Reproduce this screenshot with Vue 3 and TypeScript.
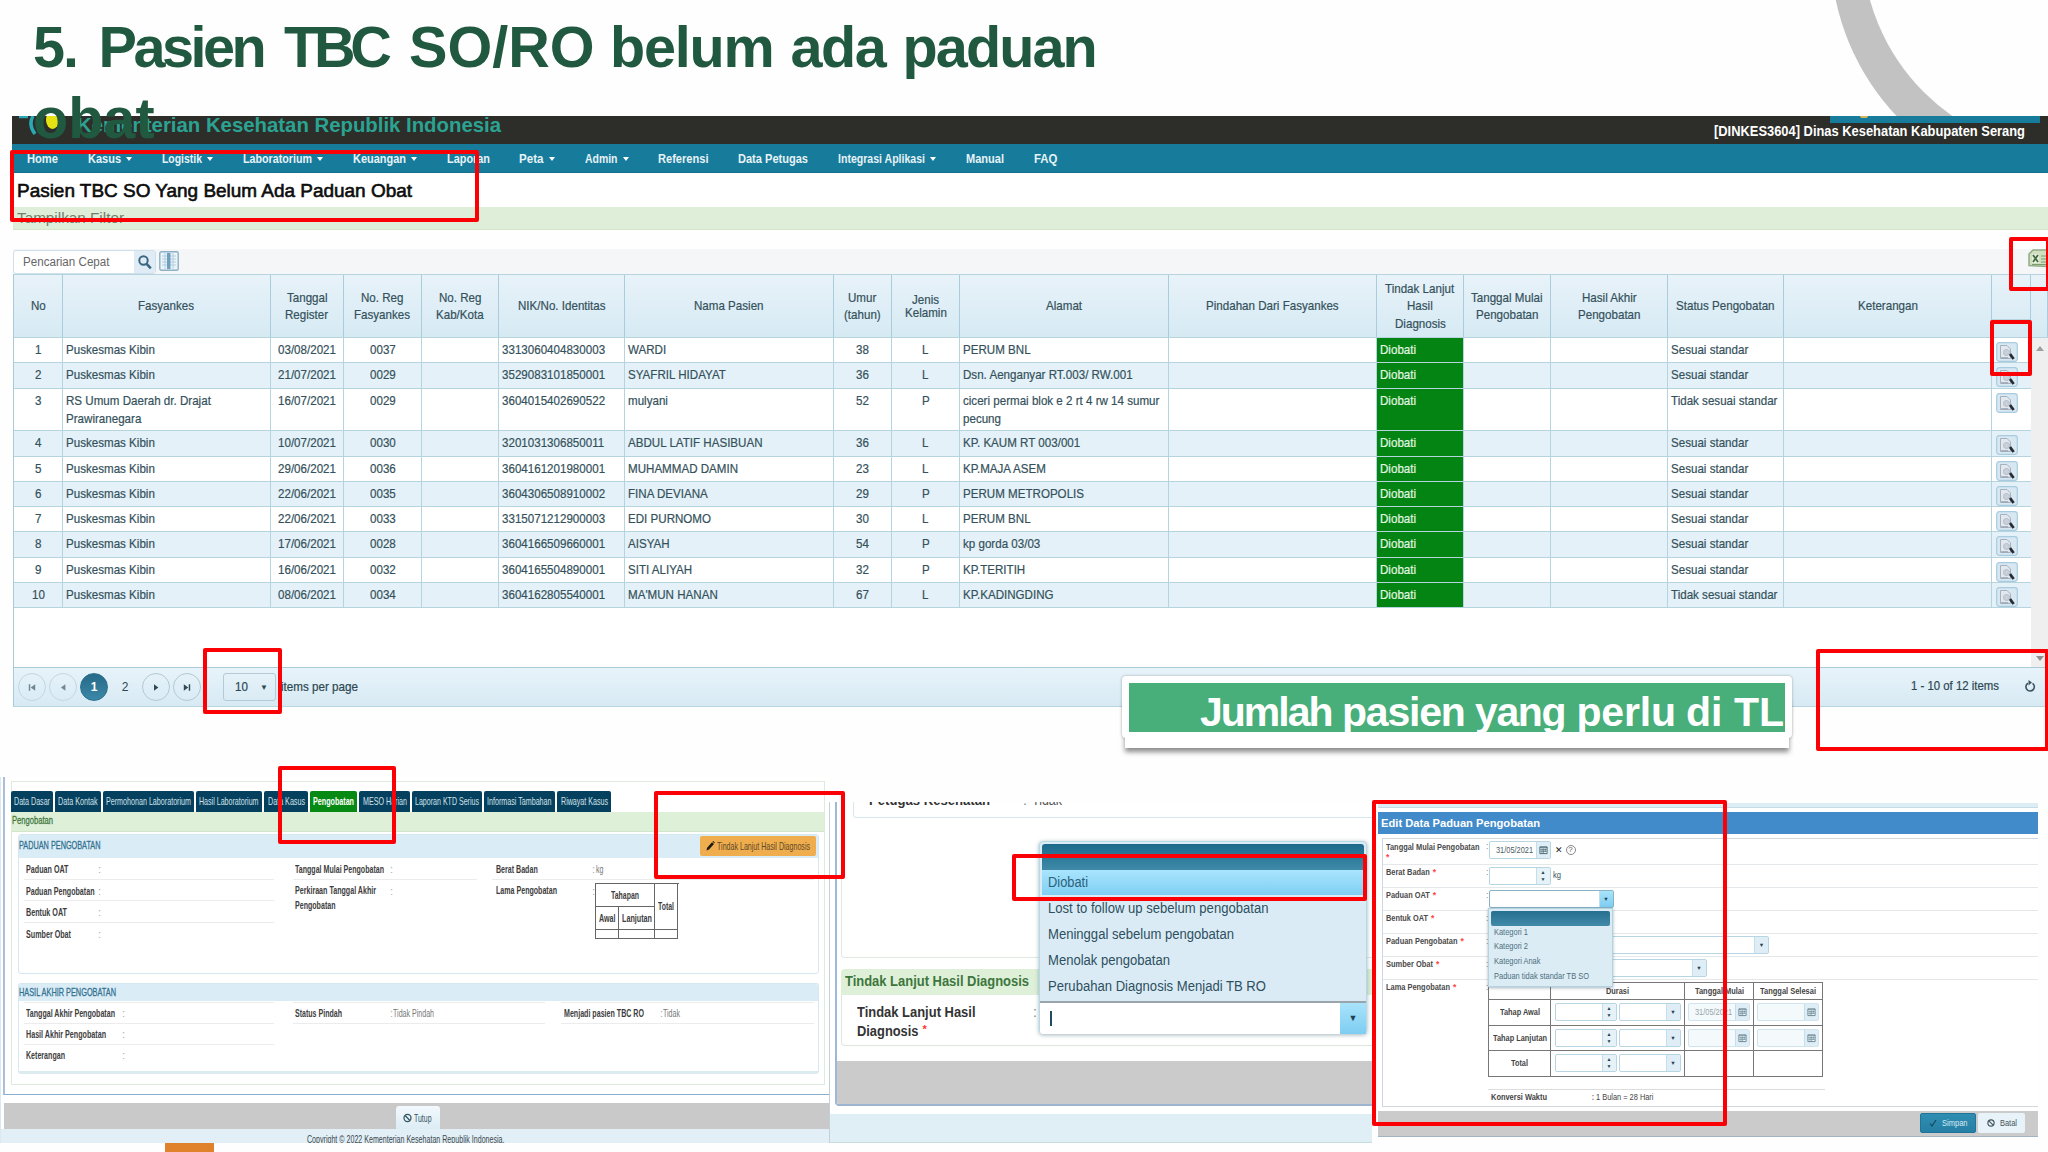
<script setup lang="ts">
import type { Directive } from 'vue'

/**
 * Horizontally squeezes a text run. Values below 3 are a ratio,
 * larger ones are the wanted width in pixels.
 */
const vFit: Directive<HTMLElement, number> = {
  mounted(el, binding) {
    const natural = el.getBoundingClientRect().width
    const k = binding.value < 3 ? binding.value : binding.value / natural
    el.style.transform = `scaleX(${k})`
    el.style.marginRight = `${natural * (k - 1)}px`
  },
}

interface Word { text: string; step: number; ls: number }
const titleWords: Word[] = [
  { text: '5.', step: 65.5, ls: -2 },
  { text: 'Pasien', step: 185.5, ls: -3.5 },
  { text: 'TBC', step: 125, ls: -5.2 },
  { text: 'SO/RO', step: 201, ls: 0 },
  { text: 'belum', step: 180.5, ls: -1.2 },
  { text: 'ada', step: 112, ls: -1.5 },
  { text: 'paduan', step: 200, ls: -1.9 },
]
const bannerWords: Word[] = [
  { text: 'Jumlah', step: 142, ls: -2 },
  { text: 'pasien', step: 133, ls: -1.2 },
  { text: 'yang', step: 101.5, ls: -1.4 },
  { text: 'perlu', step: 109.5, ls: -0.2 },
  { text: 'di', step: 48, ls: 0 },
  { text: 'TL', step: 52, ls: 0 },
]

interface NavItem { text: string; w: number; caret?: boolean }
const nav: NavItem[] = [
  { text: 'Home', w: 31 },
  { text: 'Kasus', w: 33, caret: true },
  { text: 'Logistik', w: 40, caret: true },
  { text: 'Laboratorium', w: 69, caret: true },
  { text: 'Keuangan', w: 53, caret: true },
  { text: 'Laporan', w: 43 },
  { text: 'Peta', w: 24.5, caret: true },
  { text: 'Admin', w: 32.5, caret: true },
  { text: 'Referensi', w: 50.5 },
  { text: 'Data Petugas', w: 70 },
  { text: 'Integrasi Aplikasi', w: 87, caret: true },
  { text: 'Manual', w: 38 },
  { text: 'FAQ', w: 23.5 },
]

const headers: string[][] = [
  ['No'], ['Fasyankes'], ['Tanggal', 'Register'], ['No. Reg', 'Fasyankes'], ['No. Reg', 'Kab/Kota'],
  ['NIK/No. Identitas'], ['Nama Pasien'], ['Umur', '(tahun)'], ['Jenis', 'Kelamin'], ['Alamat'],
  ['Pindahan Dari Fasyankes'], ['Tindak Lanjut', 'Hasil', 'Diagnosis'], ['Tanggal Mulai', 'Pengobatan'],
  ['Hasil Akhir', 'Pengobatan'], ['Status Pengobatan'], ['Keterangan'],
]

interface Patient {
  h: number; unit: string[]; date: string; reg: string; nik: string; name: string
  age: number; sex: string; address: string[]; status: string
}
const kibin = ['Puskesmas Kibin']
const ok = 'Sesuai standar'
const notOk = 'Tidak sesuai standar'
const patients: Patient[] = [
  { h: 25, unit: kibin, date: '03/08/2021', reg: '0037', nik: '3313060404830003', name: 'WARDI', age: 38, sex: 'L', address: ['PERUM BNL'], status: ok },
  { h: 26, unit: kibin, date: '21/07/2021', reg: '0029', nik: '3529083101850001', name: 'SYAFRIL HIDAYAT', age: 36, sex: 'L', address: ['Dsn. Aenganyar RT.003/ RW.001'], status: ok },
  { h: 42, unit: ['RS Umum Daerah dr. Drajat', 'Prawiranegara'], date: '16/07/2021', reg: '0029', nik: '3604015402690522', name: 'mulyani', age: 52, sex: 'P', address: ['ciceri permai blok e 2 rt 4 rw 14 sumur', 'pecung'], status: notOk },
  { h: 26, unit: kibin, date: '10/07/2021', reg: '0030', nik: '3201031306850011', name: 'ABDUL LATIF HASIBUAN', age: 36, sex: 'L', address: ['KP. KAUM RT 003/001'], status: ok },
  { h: 25, unit: kibin, date: '29/06/2021', reg: '0036', nik: '3604161201980001', name: 'MUHAMMAD DAMIN', age: 23, sex: 'L', address: ['KP.MAJA ASEM'], status: ok },
  { h: 25, unit: kibin, date: '22/06/2021', reg: '0035', nik: '3604306508910002', name: 'FINA DEVIANA', age: 29, sex: 'P', address: ['PERUM METROPOLIS'], status: ok },
  { h: 25, unit: kibin, date: '22/06/2021', reg: '0033', nik: '3315071212900003', name: 'EDI PURNOMO', age: 30, sex: 'L', address: ['PERUM BNL'], status: ok },
  { h: 26, unit: kibin, date: '17/06/2021', reg: '0028', nik: '3604166509660001', name: 'AISYAH', age: 54, sex: 'P', address: ['kp gorda 03/03'], status: ok },
  { h: 25, unit: kibin, date: '16/06/2021', reg: '0032', nik: '3604165504890001', name: 'SITI ALIYAH', age: 32, sex: 'P', address: ['KP.TERITIH'], status: ok },
  { h: 25, unit: kibin, date: '08/06/2021', reg: '0034', nik: '3604162805540001', name: "MA'MUN HANAN", age: 67, sex: 'L', address: ['KP.KADINGDING'], status: notOk },
]

const tabs = [
  { text: 'Data Dasar', w: 42, tw: 36 },
  { text: 'Data Kontak', w: 46, tw: 39.5 },
  { text: 'Permohonan Laboratorium', w: 91, tw: 85 },
  { text: 'Hasil Laboratorium', w: 66, tw: 59.5 },
  { text: 'Data Kasus', w: 44, tw: 37 },
  { text: 'Pengobatan', w: 47, tw: 41, active: true },
  { text: 'MESO Harian', w: 51, tw: 44 },
  { text: 'Laporan KTD Serius', w: 70, tw: 64 },
  { text: 'Informasi Tambahan', w: 71, tw: 64.5 },
  { text: 'Riwayat Kasus', w: 54, tw: 47 },
]

const regimen = [
  { text: 'Paduan OAT', w: 42.5 },
  { text: 'Paduan Pengobatan', w: 68.5 },
  { text: 'Bentuk OAT', w: 41 },
  { text: 'Sumber Obat', w: 45 },
]
const outcome = [
  { text: 'Tanggal Akhir Pengobatan', w: 89 },
  { text: 'Hasil Akhir Pengobatan', w: 80 },
  { text: 'Keterangan', w: 39 },
]
const followUps = [
  { text: 'Diobati', w: 40, active: true },
  { text: 'Lost to follow up sebelum pengobatan', w: 220.5 },
  { text: 'Meninggal sebelum pengobatan', w: 186 },
  { text: 'Menolak pengobatan', w: 122 },
  { text: 'Perubahan Diagnosis Menjadi TB RO', w: 218 },
]
const categories = [
  { text: 'Kategori 1', w: 34 },
  { text: 'Kategori 2', w: 34 },
  { text: 'Kategori Anak', w: 46.5 },
  { text: 'Paduan tidak standar TB SO', w: 95 },
]
const phases = [
  { text: 'Tahap Awal', w: 40, start: '31/05/2021', dates: true },
  { text: 'Tahap Lanjutan', w: 54, start: '', dates: true },
  { text: 'Total', w: 17, start: '', dates: false },
]

// Highlight frames: x, y, width, height
const marks = [
  [10, 150, 469, 72], [2009, 237, 41, 54], [1990, 320, 42, 56], [203, 648, 79, 66],
  [1816, 649, 233, 102], [278, 766, 118, 78], [654, 791, 191, 88], [1012, 854, 355, 47],
  [1372, 800, 355, 326],
]
</script>

<template>
  <main class="slide">
    <svg class="defs" width="0" height="0">
      <symbol id="i-cal" viewBox="0 0 10 10">
        <path d="M1 1.5h8v7.5H1z" fill="#f3fafd" stroke="currentColor" stroke-width="1" />
        <path d="M1 2.3h8M3.4 3v5.6M5.2 3v5.6M7 3v4M1.5 4.6h7M1.5 6.5h7" stroke="currentColor" stroke-width=".7" fill="none" />
      </symbol>
      <symbol id="i-ban" viewBox="0 0 10 10">
        <circle cx="5" cy="5" r="3.9" fill="none" stroke="currentColor" stroke-width="1.4" />
        <path d="M2.3 2.3l5.4 5.4" stroke="currentColor" stroke-width="1.4" />
      </symbol>
      <symbol id="i-doc" viewBox="0 0 22 20">
        <rect x=".7" y=".7" width="20.6" height="18.6" rx="2.5" fill="#d7e8f3" stroke="#a9cbdf" stroke-width="1.2" />
        <path d="M4.500 3.500h6.500l3.500 3.500v9.500h-10z" fill="#e3e8ee" stroke="#a5b1bf" stroke-width="1" />
        <circle cx="10.500" cy="10.500" r="3" fill="#c9d0d9" stroke="#b3bcc8" />
        <path d="M12.200 15.800h-7" stroke="#8f9baa" stroke-width="1" />
        <path d="M14 12l3.600 5" stroke="#252c35" stroke-width="2.800" />
      </symbol>
    </svg>

    <svg class="ring" width="240" height="116" viewBox="0 0 240 116">
      <circle cx="262" cy="-50" r="241.500" fill="#c2c2c2" />
      <circle cx="262" cy="-56.200" r="209.700" fill="#fefefe" />
    </svg>

    <section class="app">
      <header class="brand">
        <svg class="logo" width="60" height="20" viewBox="0 0 60 20">
          <path d="M2 .5h9M16 0q-5 9 2 18" stroke="#2aa9b4" stroke-width="3.500" fill="none" />
          <ellipse cx="35.500" cy="4" rx="6.500" ry="9" fill="#e6e312" />
        </svg>
        <span v-fit="424" class="t brand-name">Kementerian Kesehatan Republik Indonesia</span>
        <span v-fit="311" class="t brand-user">[DINKES3604] Dinas Kesehatan Kabupaten Serang</span>
        <i class="brand-btn"><i></i></i>
      </header>
      <nav class="nav">
        <span v-for="n in nav" :key="n.text" class="nav-item">
          <span v-fit="n.w" class="t">{{ n.text }}</span><i v-if="n.caret" class="caret"></i>
        </span>
      </nav>
      <h2 class="page-title"><span v-fit="395" class="t">Pasien TBC SO Yang Belum Ada Paduan Obat</span></h2>
      <div class="filter"><span v-fit="107" class="t">Tampilkan Filter</span></div>

      <div class="toolbar">
        <div class="search">
          <span v-fit="86.5" class="t">Pencarian Cepat</span>
          <i class="search-btn">
            <svg width="16" height="16" viewBox="0 0 16 16"><circle cx="6.5" cy="6.5" r="4.2" fill="none" stroke="#3c6780" stroke-width="2" /><path d="M9.6 9.8l4.2 4.6" stroke="#3c6780" stroke-width="2.6" /></svg>
          </i>
        </div>
        <svg class="cols" width="20" height="20" viewBox="0 0 20 20">
          <rect x=".8" y=".8" width="18.4" height="18.4" rx="1.5" fill="#eaf4fa" stroke="#8fb0c4" stroke-width="1.4" />
          <path d="M3 5h14M3 8h14M3 11h14M3 14h14M6 2v16M14 2v16" stroke="#aac7d8" stroke-width=".8" />
          <path d="M8 2h3.500v16H8z" fill="#6f9fbd" />
        </svg>
        <svg class="excel" width="20" height="19" viewBox="0 0 20 19">
          <path d="M5 1h15v16.500l-19-1V5z" fill="#cfdfc0" stroke="#93ab85" stroke-width="1.5" />
          <path d="M4 5h7v9H4z" fill="#e6eedd" /><path d="M5 6l5 7M10 6l-5 7" stroke="#42693f" stroke-width="1.800" /><path d="M13 7h6M13 10h6M13 13h6M4 15.500h14" stroke="#7d9c72" stroke-width="1.200" />
        </svg>
      </div>

      <div class="grid">
        <div class="row head">
          <div v-for="(h, i) in headers" :key="i" class="cell" :class="{ tight: i === 8 }">
            <span v-for="l in h" :key="l"><span v-fit="0.935" class="t">{{ l }}</span></span>
          </div>
          <div class="cell split"></div><div class="cell"></div>
        </div>
        <div class="body">
          <div class="rows">
            <div v-for="(p, i) in patients" :key="i" class="row" :class="{ alt: i % 2 }" :style="{ height: p.h + 'px' }">
              <div class="cell c num"><span v-fit="0.935" class="t">{{ i + 1 }}</span></div>
              <div class="cell"><span v-for="l in p.unit" :key="l"><span v-fit="0.935" class="t">{{ l }}</span></span></div>
              <div class="cell c"><span v-fit="0.935" class="t">{{ p.date }}</span></div>
              <div class="cell c"><span v-fit="0.935" class="t">{{ p.reg }}</span></div>
              <div class="cell"></div>
              <div class="cell"><span v-fit="0.935" class="t">{{ p.nik }}</span></div>
              <div class="cell"><span v-fit="0.935" class="t">{{ p.name }}</span></div>
              <div class="cell c"><span v-fit="0.935" class="t">{{ p.age }}</span></div>
              <div class="cell c"><span v-fit="0.935" class="t">{{ p.sex }}</span></div>
              <div class="cell"><span v-for="l in p.address" :key="l"><span v-fit="0.935" class="t">{{ l }}</span></span></div>
              <div class="cell"></div>
              <div class="cell treated"><span v-fit="0.935" class="t">Diobati</span></div>
              <div class="cell"></div><div class="cell"></div>
              <div class="cell"><span v-fit="0.935" class="t">{{ p.status }}</span></div>
              <div class="cell"></div>
              <div class="cell act"><svg width="22" height="20"><use href="#i-doc" /></svg></div>
            </div>
          </div>
          <div class="scroll"><i class="up"></i><i class="down"></i></div>
        </div>
        <footer class="pager">
          <i class="pg dim"><svg width="8" height="9" viewBox="0 0 10 10"><path d="M1 1h1.8v8H1zM9 1v8L3.4 5z" /></svg></i>
          <i class="pg dim"><svg width="8" height="9" viewBox="0 0 10 10"><path d="M8 1v8L2.4 5z" /></svg></i>
          <i class="pg on">1</i>
          <i class="pg plain">2</i>
          <i class="pg"><svg width="8" height="9" viewBox="0 0 10 10"><path d="M2.5 1v8L8 5z" /></svg></i>
          <i class="pg"><svg width="8" height="9" viewBox="0 0 10 10"><path d="M9 1H7.2v8H9zM1 1v8l5.600-4z" /></svg></i>
          <span class="size"><span v-fit="0.935" class="t">10</span><b>▼</b></span>
          <span v-fit="77" class="t">items per page</span>
          <span v-fit="88" class="t total">1 - 10 of 12 items</span>
          <svg class="reload" width="12" height="14" viewBox="0 0 12 14"><path d="M8.500 3.300a4.200 4.200 0 1 1-4.600-.1" fill="none" stroke="#3a5560" stroke-width="1.6" /><path d="M4.500 0L8 2.600 4.500 5.400z" fill="#3a5560" /></svg>
        </footer>
      </div>
    </section>

    <h1 class="title">
      <span class="words"><span v-for="w in titleWords" :key="w.text" :style="{ width: w.step + 'px', letterSpacing: w.ls + 'px' }">{{ w.text }} </span></span>
      <span class="words">obat</span>
    </h1>

    <div class="banner-back"></div>
    <div class="banner">
      <div class="words"><span v-for="w in bannerWords" :key="w.text" :style="{ width: w.step + 'px', letterSpacing: w.ls + 'px' }">{{ w.text }} </span></div>
    </div>

    <!-- Treatment tab -->
    <section class="case">
      <div class="case-frame">
        <div class="case-box">
          <div class="tabs">
            <span v-for="t in tabs" :key="t.text" class="tab" :class="{ active: t.active }" :style="{ width: t.w + 'px' }"><span v-fit="t.tw" class="t">{{ t.text }}</span></span>
          </div>
          <div class="strip"><span v-fit="41" class="t">Pengobatan</span></div>
          <div class="card regimen">
            <div class="card-head">
              <span v-fit="81.500" class="t">PADUAN PENGOBATAN</span>
              <button class="warn">
                <svg width="9" height="10" viewBox="0 0 9 10"><path d="M.5 9.500l.6-2.800L6 1.200 8 3 3 8.600zM6.500.7l.8-.6 1.500 1.400-.5.800z" fill="#1d1a14" /></svg>
                <span v-fit="93" class="t">Tindak Lanjut Hasil Diagnosis</span>
              </button>
            </div>
            <div class="trio">
              <div>
                <div v-for="r in regimen" :key="r.text" class="line"><span class="lab"><span v-fit="r.w" class="t">{{ r.text }}</span></span><em>:</em></div>
              </div>
              <div>
                <div class="line"><span class="lab"><span v-fit="89" class="t">Tanggal Mulai Pengobatan</span></span><em>:</em></div>
                <div class="line tall"><span class="lab"><span v-fit="81" class="t">Perkiraan Tanggal Akhir</span><br><span v-fit="40.500" class="t">Pengobatan</span></span><em>:</em></div>
              </div>
              <div>
                <div class="line"><span class="lab"><span v-fit="41.700" class="t">Berat Badan</span></span><em>:</em><span v-fit="7.500" class="t val">kg</span></div>
                <div class="line tall"><span class="lab"><span v-fit="61" class="t">Lama Pengobatan</span></span><em>:</em>
                  <div class="mini">
                    <div class="m1"><span v-fit="28" class="t">Tahapan</span></div>
                    <div class="m2"><span v-fit="16" class="t">Total</span></div>
                    <div><span v-fit="16.500" class="t">Awal</span></div>
                    <div><span v-fit="30" class="t">Lanjutan</span></div>
                    <div></div><div></div><div></div>
                  </div>
                </div>
              </div>
            </div>
          </div>
          <div class="card outcome">
            <div class="card-head"><span v-fit="97" class="t">HASIL AKHIR PENGOBATAN</span></div>
            <div class="trio">
              <div>
                <div v-for="r in outcome" :key="r.text" class="line"><span class="lab"><span v-fit="r.w" class="t">{{ r.text }}</span></span><em>:</em></div>
              </div>
              <div>
                <div class="line"><span class="lab"><span v-fit="47" class="t">Status Pindah</span></span><em>:</em><span v-fit="41" class="t val">Tidak Pindah</span></div>
              </div>
              <div>
                <div class="line"><span class="lab"><span v-fit="80" class="t">Menjadi pasien TBC RO</span></span><em>:</em><span v-fit="17" class="t val">Tidak</span></div>
              </div>
            </div>
          </div>
        </div>
      </div>
      <div class="case-actions">
        <span class="close"><svg width="9" height="10" preserveAspectRatio="none"><use href="#i-ban" /></svg><span v-fit="17.500" class="t">Tutup</span></span>
      </div>
      <div class="copy"><span v-fit="197.500" class="t">Copyright © 2022 Kementerian Kesehatan Republik Indonesia.</span></div>
    </section>
    <i class="accent"></i>

    <!-- Diagnosis follow-up -->
    <section class="follow">
      <div class="follow-frame">
        <div class="follow-top">
          <span v-fit="121" class="t">Petugas Kesehatan</span><em>:</em><span v-fit="30" class="t light">Tidak</span>
        </div>
        <div class="follow-space"></div>
        <div class="follow-head"><span v-fit="184" class="t">Tindak Lanjut Hasil Diagnosis</span></div>
        <div class="follow-body">
          <div class="follow-label"><span v-fit="118.500" class="t">Tindak Lanjut Hasil</span><br><span v-fit="61.500" class="t">Diagnosis</span><sup>*</sup></div>
          <em>:</em>
        </div>
        <div class="follow-gray"></div>
      </div>
      <div class="follow-foot"></div>
      <div class="menu">
        <div class="menu-blank"></div>
        <div v-for="f in followUps" :key="f.text" class="opt" :class="{ active: f.active }"><span v-fit="f.w" class="t">{{ f.text }}</span></div>
        <div class="combo"><i class="cursor"></i><i class="drop">▼</i></div>
      </div>
    </section>

    <!-- Edit dialog -->
    <section class="edit">
      <div class="edit-top"></div>
      <div class="edit-head"><span v-fit="159" class="t">Edit Data Paduan Pengobatan</span></div>
      <div class="form">
        <div class="frow first">
          <div class="flab"><span v-fit="93.500" class="t">Tanggal Mulai Pengobatan</span><br><b>*</b></div><em>:</em>
          <div class="inp date"><span v-fit="37" class="t">31/05/2021</span><i><svg width="9" height="10"><use href="#i-cal" /></svg></i></div>
          <span class="x">✕</span><span class="help">?</span>
        </div>
        <div class="frow">
          <div class="flab"><span v-fit="43.700" class="t">Berat Badan</span><b>*</b></div><em>:</em>
          <div class="inp"><i class="spin">▲<br>▼</i></div><span v-fit="8" class="t kg">kg</span>
        </div>
        <div class="frow">
          <div class="flab"><span v-fit="43.700" class="t">Paduan OAT</span><b>*</b></div><em>:</em>
          <div class="inp oat"><i>▼</i></div>
        </div>
        <div class="frow"><div class="flab"><span v-fit="42" class="t">Bentuk OAT</span><b>*</b></div><em>:</em></div>
        <div class="frow">
          <div class="flab"><span v-fit="71.500" class="t">Paduan Pengobatan</span><b>*</b></div><em>:</em>
          <div class="inp wide"><i>▼</i></div>
        </div>
        <div class="frow">
          <div class="flab"><span v-fit="47" class="t">Sumber Obat</span><b>*</b></div><em>:</em>
          <div class="inp mid"><i>▼</i></div>
        </div>
        <div class="frow last">
          <div class="flab"><span v-fit="64" class="t">Lama Pengobatan</span><b>*</b></div><em>:</em>
          <div class="dur">
            <div class="dt">
              <div></div>
              <div><span v-fit="23" class="t">Durasi</span></div>
              <div><span v-fit="49" class="t">Tanggal Mulai</span></div>
              <div><span v-fit="56" class="t">Tanggal Selesai</span></div>
              <template v-for="p in phases" :key="p.text">
                <div><span v-fit="p.w" class="t">{{ p.text }}</span></div>
                <div><div class="inp"><i class="spin">▲<br>▼</i></div><div class="inp"><i>▼</i></div></div>
                <div><div v-if="p.dates" class="inp date off"><span v-if="p.start" v-fit="37" class="t">{{ p.start }}</span><i><svg width="9" height="10"><use href="#i-cal" /></svg></i></div></div>
                <div><div v-if="p.dates" class="inp date off"><i><svg width="9" height="10"><use href="#i-cal" /></svg></i></div></div>
              </template>
            </div>
            <div class="conv"><span><span v-fit="56" class="t">Konversi Waktu</span></span><em>:</em><span v-fit="57.500" class="t v">1 Bulan = 28 Hari</span></div>
          </div>
        </div>
      </div>
      <div class="edit-foot">
        <span class="save"><svg width="8" height="8" viewBox="0 0 8 8"><path d="M1 4.500L3 7l4-6" fill="none" stroke="#124a63" stroke-width="1.200" /></svg><span v-fit="25.500" class="t">Simpan</span></span>
        <span class="cancel"><svg width="8" height="8"><use href="#i-ban" /></svg><span v-fit="17" class="t">Batal</span></span>
      </div>
      <div class="cats">
        <div class="cats-blank"></div>
        <div v-for="c in categories" :key="c.text" class="cat"><span v-fit="c.w" class="t">{{ c.text }}</span></div>
      </div>
    </section>

    <i v-for="(m, i) in marks" :key="i" class="mark" :style="{ left: m[0] + 'px', top: m[1] + 'px', width: m[2] + 'px', height: m[3] + 'px' }"></i>
  </main>
</template>

<style>
body { margin: 0; background: #fefefe; }
</style>

<style scoped>
.slide, .slide * { box-sizing: border-box; }
.slide { position: relative; width: 2048px; height: 1152px; overflow: hidden; background: #fefefe; font-family: "Liberation Sans", Arial, sans-serif; color: #34515b; }
.slide i, .slide em { font-style: normal; }
.defs { position: absolute; }
.t { display: inline-block; white-space: nowrap; transform-origin: 0 50%; flex: none; }
.ring { position: absolute; left: 1810px; top: 0; }

/* slide title */
.title { position: absolute; left: 33px; top: 12px; margin: 0; font-size: 57.6px; line-height: 71px; font-weight: 700; color: #20593f; }
.words { display: flex; white-space: nowrap; }
.words > span { flex: none; }

/* application window */
.app { position: absolute; left: 12px; top: 116px; width: 2036px; height: 592px; display: flex; flex-direction: column; }
.brand { position: relative; height: 28px; background: #2d2e2a; display: flex; align-items: flex-start; overflow: hidden; }
.logo { margin-left: 5px; flex: none; }
.brand-name { font-size: 20.500px; line-height: 22px; font-weight: 700; color: #2ba392; margin-left: 0; margin-top: -2px; }
.brand-user { position: absolute; left: 1702px; top: 7px; font-size: 14px; line-height: 16px; font-weight: 700; color: #fff; }
.brand-btn { position: absolute; left: 1818px; top: 0; width: 210px; height: 7px; background: #177c9c; }
.brand-btn i { display: block; width: 8px; height: 2px; margin-left: 30px; background: #d9b45c; border-radius: 0 0 4px 4px; }
.nav { height: 29px; background: #177c9c; display: flex; align-items: center; gap: 29.700px; padding: 2px 0 0 15px; font-size: 12px; font-weight: 700; color: #e6f2f6; border-bottom: 1px solid #15708d; }
.nav-item { display: flex; align-items: center; flex: none; }
.caret { margin-left: 5.300px; border: 3.500px solid transparent; border-top: 4px solid #fff; border-bottom: 0; }
.page-title { margin: 0; height: 34px; background: #fff; padding-left: 5px; font-size: 18.500px; line-height: 35px; font-weight: 400; color: #0d0d0d; -webkit-text-stroke: .6px #0d0d0d; }
.filter { height: 23px; margin-left: 1px; background: #dfeed9; border-bottom: 1px solid #d5e5c9; padding-left: 4px; font-size: 14.500px; line-height: 22px; color: #71806c; }
.toolbar { margin: 19px 0 0 1px; height: 25px; background: #f4f6f8; display: flex; align-items: center; }
.search { width: 143px; height: 24px; border: 1px solid #cfe0ea; border-radius: 3px; background: #fff; display: flex; align-items: center; padding-left: 9px; font-size: 12.500px; color: #666; }
.search-btn { margin-left: auto; width: 21px; height: 22px; background: #dfecf6; display: flex; align-items: center; justify-content: center; }
.cols { margin-left: 3px; margin-top: -2px; }
.excel { margin-left: auto; align-self: flex-start; }

.grid { margin-left: 1px; height: 433px; border-left: 1px solid #a9cbd9; border-bottom: 1px solid #b9d5e1; display: flex; flex-direction: column; background: #fff; font-size: 12.400px; }
.grid .t { -webkit-text-stroke: .2px currentColor; }
.row { display: grid; grid-template-columns: 49px 208px 73px 78px 77px 126px 209px 58px 68px 209px 208px 87px 87px 117px 116px 208px 39px; border-bottom: 1px solid #b5d4de; }
.cell { border-right: 1px solid #b5d4de; padding: 2.500px 0 0 2.500px; line-height: 18.500px; overflow: hidden; }
.cell > span:not(.t) { display: block; }
.cell.c { text-align: center; padding-left: 0; }
.row.head { height: 64px; grid-template-columns: 49px 208px 73px 78px 77px 126px 209px 58px 68px 209px 208px 87px 87px 117px 116px 208px 39px 17px; background: linear-gradient(#e8f2f9, #d6eaf4); border-top: 1px solid #b5d4de; flex: none; }
.head .cell { display: flex; flex-direction: column; justify-content: center; text-align: center; padding: 2px 0 0; line-height: 17.400px; border-color: #a9cddb; }
.head .tight { line-height: 13px; }
.head .split { background: linear-gradient(#b5d4de, #b5d4de) 0 44px / 100% 1px no-repeat; }
.row.alt { background: #e5f1f8; }
.treated { background: #048513; color: #e3f6e0; }
.cell.act { padding: 3.500px 0 0 4px; border-right: 0; overflow: visible; line-height: 0; }
.body { display: flex; height: 330px; }
.rows { width: 2018px; }
.scroll { width: 17px; background: #efefef; display: flex; flex-direction: column; justify-content: space-between; align-items: center; padding: 8px 0 6px; }
.up { border: 4px solid transparent; border-bottom: 5px solid #9f9f9f; border-top: 0; }
.down { border: 4px solid transparent; border-top: 5px solid #8f8f8f; border-bottom: 0; }
.pager { height: 39px; border-top: 1px solid #a9cbd9; background: linear-gradient(#e8f3fa, #d7eaf4); display: flex; align-items: center; padding: 0 12px 0 4px; color: #2c4750; }
.pg { width: 28px; height: 28px; margin-right: 3px; border: 1px solid #b3c9d3; border-radius: 50%; display: flex; align-items: center; justify-content: center; fill: #2f4a55; font-size: 12px; flex: none; }
.pg.dim { fill: #6e8792; border-color: #c4d7e0; }
.pg.on { background: linear-gradient(#266a87, #3c87a8); border-color: #2b718e; color: #fff; font-weight: 700; }
.pg.plain { border-color: transparent; }
.size { width: 53px; height: 28px; margin: 0 5px 0 19px; border: 1px solid #b3cbd6; border-radius: 3px; display: flex; align-items: center; justify-content: space-between; padding: 0 7px 0 11px; flex: none; }
.size b { font-size: 8px; }
.total { margin-left: auto !important; position: relative; left: -25px; top: -1px; }

/* banner */
.banner-back { position: absolute; left: 1125px; top: 700px; width: 664px; height: 48px; background: #fff; box-shadow: 0 4px 5px rgba(0,0,0,.45); }
.banner { position: absolute; left: 1122px; top: 676px; width: 670px; height: 62px; border: 7px solid #fff; border-bottom-width: 6px; border-radius: 4px; background: #48ae7a; box-shadow: 0 0 3px rgba(0,0,0,.3); padding-left: 71px; color: #fff; font-size: 41px; line-height: 58px; font-weight: 700; background-clip: padding-box; }
.banner::after { content: ""; position: absolute; left: -4px; right: -4px; bottom: -15px; height: 12px; background: #fff; }

/* case panel */
.case { position: absolute; left: 0; top: 777px; width: 830px; height: 366px; border-left: 1px solid #dce8f0; overflow: hidden; font-size: 11.200px; display: flex; flex-direction: column; background: #fff; }
.case::after { content: ""; position: absolute; right: 0; top: 25px; bottom: 0; width: 1px; background: #c3d0da; }
.case-frame { margin-left: 2px; height: 317.500px; border-left: 2px solid #a9bfdc; border-bottom: 1px solid #8aaed0; padding: 4px 0 0 6px; flex: none; }
.case-box { width: 814px; height: 304px; border: 1px solid #dfeadf; padding-top: 9px; }
.tabs { height: 21px; display: flex; gap: 2px; margin-left: -1px; }
.tab { flex: none; background: #05405f; color: #d3e0e8; display: flex; align-items: center; justify-content: center; padding-bottom: 1px; border-radius: 2px 2px 0 0; }
.tab.active { background: #068a14; color: #fff; font-weight: 700; }
.strip { height: 20px; background: #dff0d8; border-bottom: 1px solid #d3e6cc; padding-left: 1px; line-height: 17px; color: #3c763d; margin-left: -1px; -webkit-text-stroke: .3px #3c763d; }
.card { margin: 2px 0 0 6px; width: 801px; border: 1px solid #d5e8ef; border-radius: 3px; overflow: hidden; }
.regimen { height: 140px; }
.outcome { height: 91px; margin-top: 9px; border-bottom: 3px solid #dcebf0; }
.card-head { height: 23px; background: #daecf6; display: flex; align-items: center; padding: 0 1px 3px 0; color: #31708f; -webkit-text-stroke: .3px #31708f; }
.outcome .card-head { height: 17px; padding-bottom: 2px; }
.warn { margin: 2px 1px 0 auto; width: 116px; height: 20px; border: 0; border-radius: 2px; background: #f0ad4e; display: flex; align-items: center; padding: 0 0 1px 6px; gap: 2px; font: 11px "Liberation Sans", Arial, sans-serif; color: #5c4a28; -webkit-text-stroke: 0; }
.trio { display: grid; grid-template-columns: 250px 184px 322px; padding-left: 5px; }
.regimen .trio > :nth-child(2) { margin: 0 -19px 0 19px; }
.regimen .trio > :nth-child(3) { margin: 0 -34px 0 34px; }
.outcome .trio > :nth-child(2) { margin: 0 -87px 0 19px; }
.outcome .trio > :nth-child(3) { margin: 0 -34px 0 103px; }
.line { height: 21.600px; border-bottom: 1px solid #ececec; display: flex; padding: 0 0 0 2px; line-height: 22.500px; font-size: 11px; color: #777; }
.line:last-child { border-bottom: 0; }
.trio > :nth-child(n+2) .line:first-child { border-bottom: 1px solid #ececec; }
.outcome .trio { padding-top: 1px; }
.outcome .line { line-height: 20.500px; height: 21.500px; }
.outcome .trio > * > .line:first-child { border-top: 1px solid #ececec; }
.lab { width: 72px; flex: none; font-weight: 700; color: #3d3d3d; }
.line em { width: 4px; flex: none; color: #aaa; }
.trio > :nth-child(2) .lab { width: 95px; }
.trio > :nth-child(3) .lab { width: 96px; }
.trio > :nth-child(3) .line { padding-left: 4px; }
.outcome .trio > :nth-child(3) .line { padding-left: 3px; }
.outcome .trio > :nth-child(1) .lab { width: 96px; }
.trio > :nth-child(2) .val, .outcome .trio > :nth-child(3) .val { margin-left: -1px; }
.tall { height: 62px; }
.tall .lab { line-height: 14.500px; padding-top: 3.500px; }
.mini { margin: 3px 0 0 -1px; width: 84px; height: 56px; display: grid; grid-template-columns: 23px 36px 23px; grid-template-rows: 23px 23px 9px; border: solid #666; border-width: 1px 0 0 1px; font-weight: 700; color: #3d3d3d; line-height: 12px; }
.mini > div { border: solid #666; border-width: 0 1px 1px 0; display: flex; align-items: center; justify-content: center; }
.m1 { grid-column: 1 / 3; }
.m2 { grid-column: 3; grid-row: 1 / 3; }
.case-actions { margin: 8.500px 0 0 3px; height: 26px; background: #c9c9c9; padding: 3px 0 0 392px; flex: none; }
.close { display: flex; width: 44px; height: 23px; align-items: center; gap: 2px; padding-left: 7px; background: linear-gradient(#f3f9fd, #dcecf5); border-radius: 3px 3px 0 0; color: #31555f; }
.copy { height: 14px; background: #e2eff6; padding-left: 306px; line-height: 21px; font-size: 11px; color: #3c4a50; overflow: hidden; flex: none; }
.accent { position: absolute; left: 165px; top: 1143px; width: 49px; height: 9px; background: #df822b; }

/* follow-up panel */
.follow { position: absolute; left: 830px; top: 802px; width: 542px; height: 341px; font-size: 13.800px; background: #fff; }
.follow em { color: #888; }
.follow-frame { margin-left: 5px; height: 303.500px; border-left: 2px solid #9db9da; border-bottom: 2px solid #9db5d0; border-radius: 0 0 0 4px; overflow: hidden; }
.follow-top { margin-left: 16px; height: 16px; border: 1px solid #d5e8ef; border-top: 0; border-right: 0; border-radius: 0 0 0 4px; display: flex; line-height: 16px; padding-left: 15px; font-weight: 700; color: #333; overflow: hidden; }
.follow-top .t { margin-top: -9px; }
.follow-top em { margin: -9px 5px 0 33px; font-weight: 400; }
.light { font-weight: 400; color: #555; }
.follow-space { margin-left: 4px; height: 140px; border: 1px solid #e0e9e0; border-width: 0 0 1px 1px; border-radius: 0 0 0 4px; }
.follow-head { margin: 11px 0 0 4px; height: 26px; background: #dff0d8; border-radius: 4px 0 0 0; padding-left: 4px; line-height: 26px; font-weight: 700; color: #3c763d; }
.follow-body { margin-left: 4px; height: 51px; border: 1px solid #dde8dc; border-top: 0; border-right: 0; border-radius: 0 0 0 4px; display: flex; padding-left: 15px; line-height: 19px; }
.follow-label { width: 176px; padding-top: 8px; font-weight: 700; color: #333; }
.follow-label sup { color: #f33; font-size: 11px; line-height: 0; margin-left: 4px; vertical-align: 3px; }
.follow-body em { padding-top: 8px; }
.follow-gray { margin-top: 15px; height: 43px; background: #cbcbcb; }
.follow-foot { margin: 8.500px 0 0 0; height: 29px; background: #e0eef6; border-bottom: 1px solid #c8dcdf; }
.menu { position: absolute; left: 209px; top: 39px; width: 328px; height: 193px; background: #dbebf5; border: 1px solid #b5d9e6; border-radius: 4px; padding: 2px 2px 0; box-shadow: 0 1px 4px rgba(50,90,110,.45); color: #2d5060; display: flex; flex-direction: column; }
.menu-blank { height: 26px; background: linear-gradient(#1b6a8c, #3f8aa8); border-radius: 3px 3px 0 0; flex: none; }
.opt { height: 25.900px; line-height: 27px; padding-left: 6px; flex: none; font-size: 14px; }
.opt.active { height: 25px; line-height: 25px; background: linear-gradient(#a9e5fd, #7fcff3); color: #2d6079; }
.combo { margin: 2px -2px 0; height: 33px; background: #fff; border-top: 2px solid #9aa5ab; display: flex; align-items: center; padding-left: 10px; border-radius: 0 0 3px 3px; }
.cursor { width: 2px; height: 15px; background: #1f4c60; }
.drop { margin-left: auto; width: 26px; height: 31px; background: linear-gradient(#a9e3fb, #7dcdf2); display: flex; align-items: center; justify-content: center; font-size: 9px; color: #1d4254; }

/* edit dialog */
.edit { position: absolute; left: 1378px; top: 803px; width: 660px; height: 334px; font-size: 8.600px; background: #fff; }
.edit-top { height: 5px; background: #dceef3; border-bottom: 1px solid #c5dce6; }
.edit-head { margin-top: 4px; height: 22px; background: #428bca; padding-left: 3px; line-height: 22px; font-size: 11.400px; font-weight: 700; color: #fff; }
.form { margin: 4px 0 0 4px; height: 269px; border: 1px solid #cfd8df; border-right: 0; }
.frow { height: 23px; border-bottom: 1px solid #e4e8eb; display: flex; padding-left: 3px; }
.frow.first { height: 25.500px; }
.frow.last { height: 126px; border: 0; }
.flab { width: 100px; flex: none; line-height: 10px; padding-top: 2.500px; font-weight: 700; color: #4a4a4a; }
.flab b { color: #f44; margin-left: 3px; }
.first .flab b { margin-left: 0; }
.frow em { width: 2.500px; flex: none; padding-top: 2px; line-height: 11px; color: #888; }
.inp { width: 62px; height: 18px; margin-top: 2px; border: 1px solid #b7d5e2; border-radius: 2px; background: #fff; display: flex; align-items: center; justify-content: flex-end; flex: none; color: #4a5c64; font-size: 8.500px; }
.inp i { width: 14px; height: 100%; background: #dfeef6; border-left: 1px solid #c5dfea; display: flex; align-items: center; justify-content: center; font-size: 5.500px; color: #22404d; flex: none; }
.inp i svg { color: #3b5c6b; }
.inp i.spin { font-size: 5px; line-height: 7px; text-align: center; background: #e6f2f8; }
.date .t { margin-left: auto; }
.date i { margin-left: 3px; }
.off { background: #f4f9fc; border-color: #cfe4ed; color: #96a4ab; }
.off i svg { color: #62808e; }
.x { margin: 2px 0 0 4px; width: 11px; font-size: 9px; line-height: 19px; color: #222; }
.help { width: 10px; height: 10px; margin-top: 6px; border: 1px solid #888; border-radius: 50%; font-size: 8px; line-height: 8px; text-align: center; color: #555; }
.kg { margin-left: 2px; line-height: 20px; }
.inp.oat { width: 125px; border-color: #8ab2c4; }
.inp.oat i { background: linear-gradient(#a9e3fb, #7dcdf2); }
.inp.wide { width: 280.500px; }
.inp.mid { width: 218px; }
.dur { width: 337px; padding-top: 2px; margin-left: -.5px; }
.dt { width: 335px; display: grid; grid-template-columns: 62px 134px 69px 69px; grid-template-rows: 17.500px 25.500px 25.500px 25.500px; border: solid #777; border-width: 1px 0 0 1px; font-weight: 700; color: #444; }
.dt > div { border: solid #777; border-width: 0 1px 1px 0; display: flex; align-items: center; justify-content: center; gap: 2px; }
.dt .inp { margin: 0; font-weight: 400; }
.conv { margin-top: 12px; border-top: 1px solid #ddd; height: 18px; display: flex; padding-left: 3px; line-height: 15px; font-weight: 700; color: #444; }
.conv > span:first-child { width: 100.500px; }
.conv em { padding: 0; line-height: 15px; width: 4px; }
.conv .v { font-weight: 400; }
.edit-foot { margin-top: 4px; height: 25.500px; background: #cbcbcb; border-bottom: 1px solid #9fb6c2; display: flex; justify-content: flex-end; gap: 2.500px; padding: 2px 13px 0 0; }
.save, .cancel { height: 20px; display: flex; align-items: center; border-radius: 2px; }
.save { width: 56px; background: linear-gradient(#2f8db2, #2780a5); border: 1px solid #1f7498; color: #d8ebf3; padding-left: 8px; gap: 5px; }
.cancel { width: 47px; background: #e8f3f9; color: #40525a; padding-left: 9px; gap: 5px; }
.cats { position: absolute; left: 110px; top: 105px; width: 125px; height: 78.500px; background: #dcecf5; border: 1px solid #b4d3e0; box-shadow: 0 1px 3px rgba(60,90,110,.45); padding: 2px 2px 0; color: #4d6f7e; }
.cats-blank { height: 14.500px; background: linear-gradient(#276f90, #418aa8); border-radius: 2px; }
.cat { height: 14.800px; line-height: 13.500px; padding-left: 3px; }

.mark { position: absolute; border: 4px solid #fb0005; border-radius: 2px; }
</style>
